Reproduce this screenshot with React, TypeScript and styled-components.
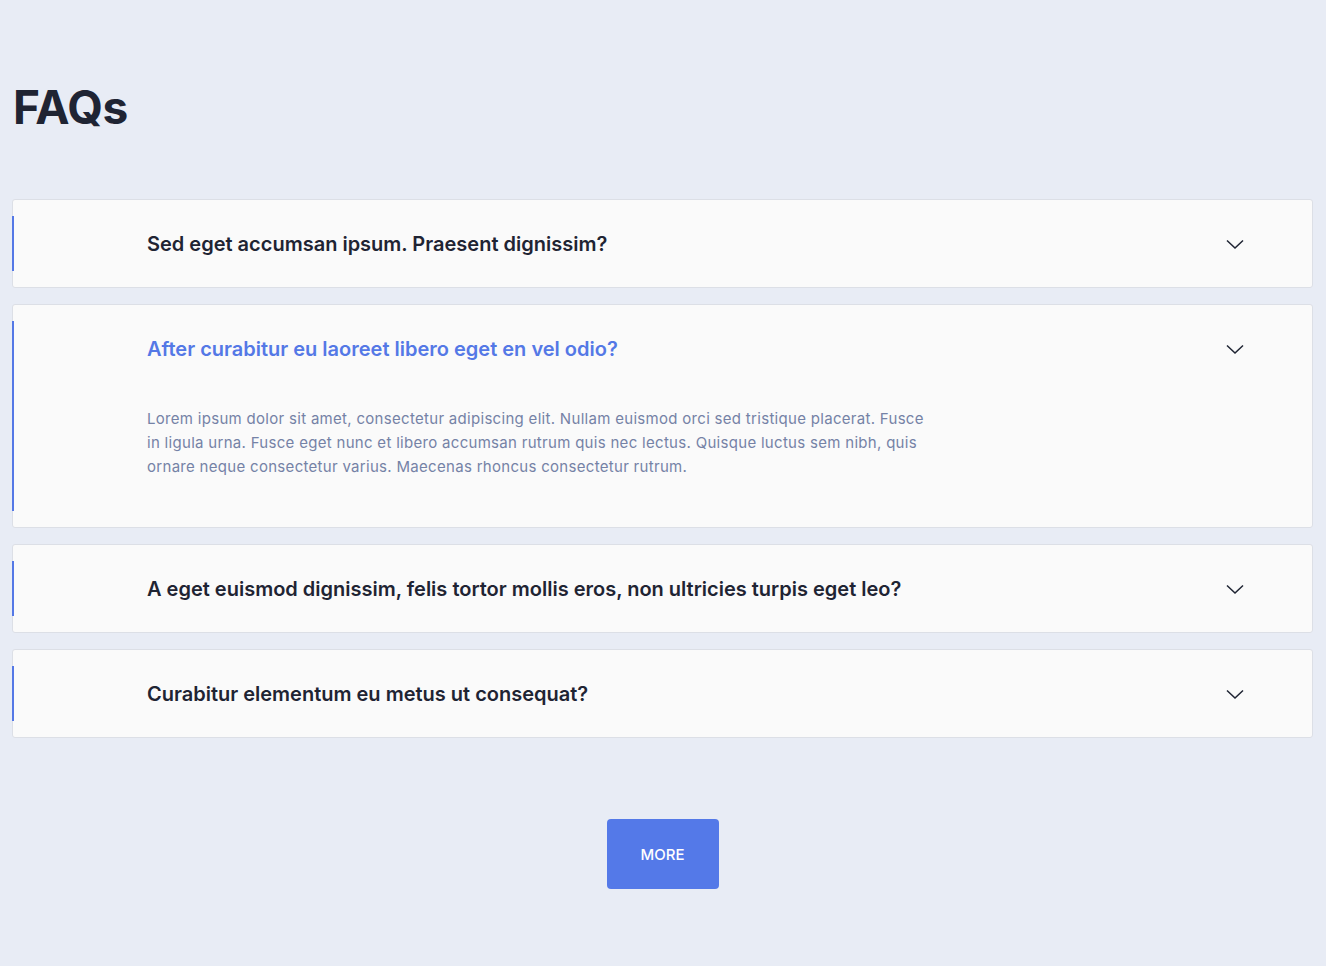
import React, { FC } from 'react'
import styled, { createGlobalStyle } from 'styled-components'

const GlobalStyle = createGlobalStyle`
  html, body {
    margin: 0;
    padding: 0;
    background-color: #e8ecf5;
  }

  body {
    font-family: Inter, 'Noto Sans', 'Liberation Sans', sans-serif;
    color: #1f2433;
  }
`

const StylePage = styled.main`
  box-sizing: border-box;
  min-height: 966px;
  padding: 72px 13px 76px 12px;
`

const StyleTitle = styled.h1`
  margin: 0 0 57px 1px;
  font-size: 46px;
  font-weight: 700;
  line-height: 70px;
  letter-spacing: -0.5px;
  color: #1f2433;
`

const StyleList = styled.div`
  display: flex;
  flex-direction: column;
  gap: 16px;
`

const StyleCard = styled.div`
  position: relative;
  background-color: #fafafa;
  border: 1px solid #dcdfe6;
  border-radius: 3px;

  &::before {
    content: '';
    position: absolute;
    top: 16px;
    bottom: 16px;
    left: -1px;
    width: 2px;
    background-color: #5478e6;
  }
`

const StyleHeader = styled.div`
  display: flex;
  flex-direction: row;
  justify-content: space-between;
  align-items: center;
  height: 87px;
  padding: 0 68px 0 134px;
  cursor: pointer;
`

const StyleQuestion = styled.h3<{ $open: boolean }>`
  margin: 0;
  font-size: 20px;
  font-weight: 600;
  line-height: 24px;
  color: ${({ $open }) => ($open ? '#5478e6' : '#1f2433')};
`

const StyleAnswer = styled.p`
  max-width: 786px;
  margin: 15px 0 0;
  padding: 0 0 48px 134px;
  font-size: 15px;
  line-height: 24px;
  letter-spacing: 0.3px;
  color: #7582a6;
`

const StyleFooter = styled.div`
  display: flex;
  justify-content: center;
  margin-top: 81px;
`

const StyleMoreButton = styled.button`
  width: 112px;
  height: 70px;
  border: none;
  border-radius: 4px;
  background-color: #5479e8;
  color: #fff;
  font-family: inherit;
  font-size: 15px;
  font-weight: 500;
  cursor: pointer;
`

const Chevron: FC = () => (
  <svg width="18" height="10" viewBox="0 0 18 10" fill="none">
    <path d="M1 1.5 L9 9 L17 1.5" stroke="#1f2433" strokeWidth="1.5" />
  </svg>
)

const faqs = [
  { q: 'Sed eget accumsan ipsum. Praesent dignissim?' },
  {
    q: 'After curabitur eu laoreet libero eget en vel odio?',
    a: 'Lorem ipsum dolor sit amet, consectetur adipiscing elit. Nullam euismod orci sed tristique placerat. Fusce in ligula urna. Fusce eget nunc et libero accumsan rutrum quis nec lectus. Quisque luctus sem nibh, quis ornare neque consectetur varius. Maecenas rhoncus consectetur rutrum.',
  },
  { q: 'A eget euismod dignissim, felis tortor mollis eros, non ultricies turpis eget leo?' },
  { q: 'Curabitur elementum eu metus ut consequat?' },
]

const App: FC = () => {
  return (
    <>
      <GlobalStyle />
      <StylePage>
        <StyleTitle>FAQs</StyleTitle>
        <StyleList>
          {faqs.map((item) => (
            <StyleCard key={item.q}>
              <StyleHeader>
                <StyleQuestion $open={!!item.a}>{item.q}</StyleQuestion>
                <Chevron />
              </StyleHeader>
              {item.a && <StyleAnswer>{item.a}</StyleAnswer>}
            </StyleCard>
          ))}
        </StyleList>
        <StyleFooter>
          <StyleMoreButton>MORE</StyleMoreButton>
        </StyleFooter>
      </StylePage>
    </>
  )
}

export default App
